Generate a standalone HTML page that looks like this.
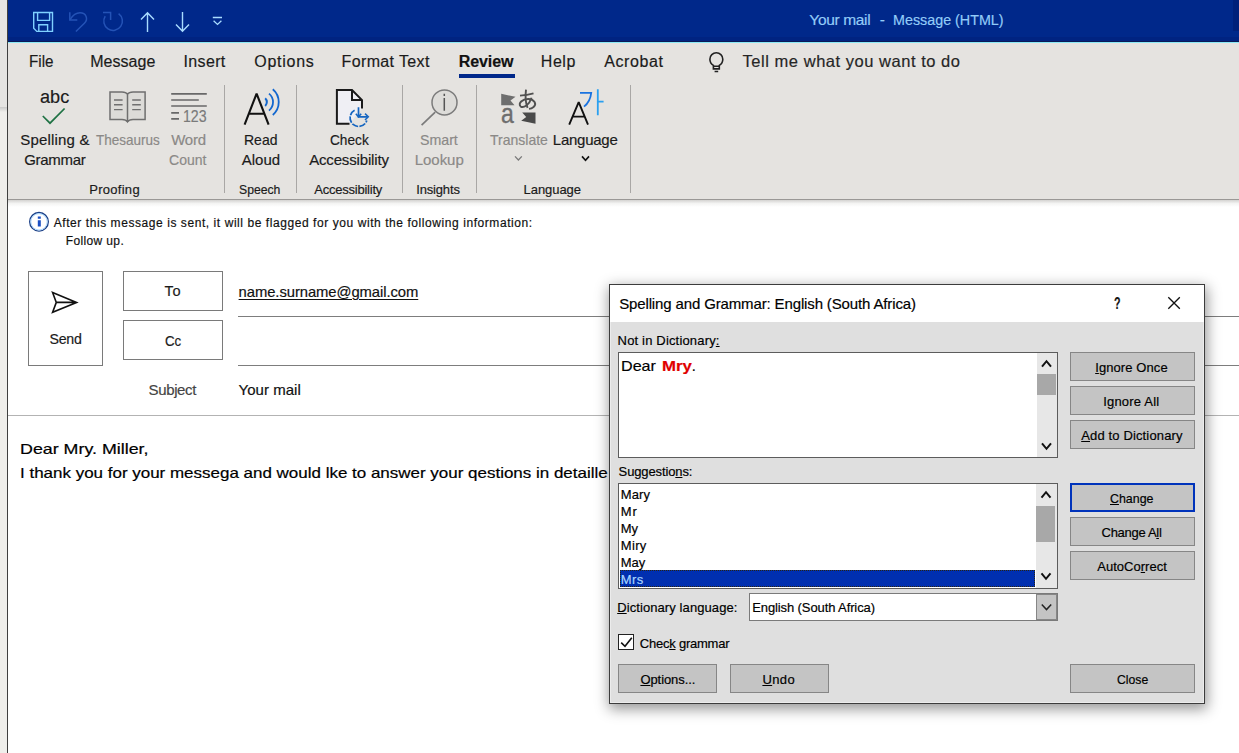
<!DOCTYPE html>
<html><head><meta charset="utf-8"><title>Your mail - Message (HTML)</title>
<style>
html,body{margin:0;padding:0;}
body{width:1239px;height:753px;overflow:hidden;background:#fff;font-family:"Liberation Sans",sans-serif;position:relative;}
.a{position:absolute;}
.t{position:absolute;white-space:pre;-webkit-text-stroke:0.18px currentColor;}
u{text-decoration:underline;text-underline-offset:1px;text-decoration-thickness:1px;}
svg{position:absolute;overflow:visible;}
.sep{position:absolute;top:85px;width:1px;height:108px;background:#a9a7a5;}
.hb{position:absolute;border:1px solid #7a7a7a;background:#fff;box-sizing:border-box;}
.btn{position:absolute;box-sizing:border-box;background:#c4c4c4;border:1px solid #868686;left:1070px;width:125px;height:29px;}
.box{position:absolute;box-sizing:border-box;background:#fff;border:1px solid #5c5c5c;}
.trk{position:absolute;background:#e7e7e7;}
.thm{position:absolute;background:#a8a8a8;}
</style></head>
<body>
<!-- left strip -->
<div class="a" style="left:0;top:0;width:7px;height:753px;background:#efeeeb;"></div>
<div class="a" style="left:0;top:0;width:7px;height:108px;background:#e5e4e2;"></div>
<div class="a" style="left:0;top:107px;width:7px;height:5px;background:linear-gradient(#c9c9c9,#efeeeb);"></div>
<div class="a" style="left:7px;top:0;width:1px;height:753px;background:#3f3f3f;"></div>
<!-- title bar -->
<div class="a" style="left:8px;top:0;width:1231px;height:41px;background:#00288a;"></div>
<div class="a" style="left:8px;top:37px;width:1231px;height:4px;background:#002381;"></div>
<div class="a" style="left:8px;top:41px;width:1231px;height:1px;background:#0a1a55;"></div>
<div class="a" style="left:8px;top:42px;width:1231px;height:1px;background:#8be9f7;"></div>
<div class="a" style="left:1233px;top:0;width:6px;height:31px;background:#00207a;"></div>
<!-- ribbon bg -->
<div class="a" style="left:8px;top:43px;width:1231px;height:156px;background:#e5e3e0;"></div>
<div class="a" style="left:8px;top:199px;width:1231px;height:1px;background:#9a9896;"></div>
<div class="a" style="left:8px;top:200px;width:1231px;height:7px;background:linear-gradient(#d4d3d1,#f4f4f3 50%,#fff);"></div>
<!-- review underline -->
<div class="a" style="left:459px;top:74px;width:56px;height:4px;background:#00288a;"></div>
<!-- separators -->
<div class="sep" style="left:224px"></div><div class="sep" style="left:296px"></div><div class="sep" style="left:402px"></div><div class="sep" style="left:476px"></div><div class="sep" style="left:630px"></div>
<!-- header -->
<div class="hb" style="left:28px;top:271px;width:75px;height:95px;"></div>
<div class="hb" style="left:123px;top:271px;width:100px;height:40px;"></div>
<div class="hb" style="left:123px;top:320px;width:100px;height:40px;"></div>
<div class="a" style="left:238px;top:316px;width:1001px;height:1px;background:#7d7d7d;"></div>
<div class="a" style="left:238px;top:365px;width:1001px;height:1px;background:#7d7d7d;"></div>
<div class="a" style="left:8px;top:415px;width:1231px;height:1px;background:#b3b3b3;"></div>
<svg width="1239" height="753" viewBox="0 0 1239 753" style="left:0;top:0" fill="none" stroke-linecap="butt">
<!-- QAT: save -->
<g stroke="#7fd0ff" stroke-width="1.4">
<path d="M33.7 12.5H52.5V31.4H36.8L33.7 28.3Z"/>
<path d="M37.6 12.5V20.4H49.6V12.5"/>
<path d="M38.8 31.4V24.8H47.6V31.4"/>
</g>
<!-- undo / redo (dim) -->
<g stroke="#2453b6" stroke-width="1.5">
<path d="M69.8 12.3V19.9H77.3"/>
<path d="M70 19.6C73 15 76.5 12.8 80 12.8C86.2 12.8 88.6 19.2 84.4 23.2L75.9 31.5"/>
<path d="M103 12.6H110.6V20"/>
<path d="M118.6 13.6A9.3 9.3 0 1 1 105.2 16.2"/>
</g>
<!-- up / down arrows -->
<g stroke="#a9dcff" stroke-width="1.4">
<path d="M147.5 32V12.8M141 19.6L147.5 12.8L154 19.6"/>
<path d="M182.5 12V31.2M176 24.4L182.5 31.2L189 24.4"/>
<path d="M212.8 17.5H222M213.6 20.7L217.5 24.4L221.4 20.7" stroke-width="1.3"/>
</g>
<!-- bulb -->
<g stroke="#222" stroke-width="1.6">
<path d="M713.4 68.9V65.4C711.2 64 709.9 61.8 709.9 59.2A6.45 6.45 0 0 1 722.8 59.2C722.8 61.8 721.5 64 719.3 65.4V68.9Z"/>
<path d="M713.4 66.3H719.3M714.6 71.5H718.2"/>
</g>
<!-- spelling check mark -->
<path d="M42.8 116L50 123.2L64.6 108.5" stroke="#1f7244" stroke-width="1.7"/>
<!-- thesaurus book -->
<g stroke="#6f6f6f" stroke-width="1.5">
<path d="M127.5 94.2C126.5 92.6 124.5 91.9 122 91.9H110V119.6H122C124.5 119.6 126.5 120.3 127.5 121.9C128.5 120.3 130.5 119.6 133 119.6H145.1V91.9H133C130.5 91.9 128.5 92.6 127.5 94.2Z" fill="#dcdbd8"/>
<path d="M127.5 94.2V121.9"/>
<path d="M114 100H122.6M114 104.8H122.6M114 109.6H122.6M132.2 100H140.8M132.2 104.8H140.8M132.2 109.6H140.8" stroke-width="1.4"/>
</g>
<!-- word count -->
<g stroke="#686868" stroke-width="1.7">
<path d="M171.2 93.8H206.8M171.2 100H198.8M171.2 106H206.8M171.2 112.8H179M171.2 118.8H179"/>
</g>
<!-- read aloud -->
<g stroke="#111" stroke-width="2.1" stroke-linejoin="bevel">
<path d="M244.6 124.6L256.6 93.6L268.6 124.6M249 113.8H264.3"/>
</g>
<g stroke="#1267cf" stroke-width="1.8">
<path d="M265.2 98.3A5.2 5.2 0 0 1 265.2 105.9" stroke-width="2"/>
<path d="M269 93.6A11 11 0 0 1 269 110.6"/>
<path d="M272.8 89.2A17 17 0 0 1 272.8 115"/>
</g>
<!-- check accessibility -->
<g stroke="#1a1a1a" stroke-width="2">
<path d="M349.5 123.8H336.9V90.1H352L362 100.1V108.5" fill="#efeff4"/>
<path d="M352 90.1V100.1H362"/>
</g>
<g stroke="#1565c0" stroke-width="1.7">
<path d="M354.6 110.3A8.6 8.6 0 1 0 366.8 120.6" stroke-dasharray="6.5 1.3"/>
<path d="M358.5 107.2V116.8H367.5"/>
<path d="M355.8 113.8L358.5 116.8L361.2 113.8M365 113.6L368.3 116.8L365 120" stroke-width="1.5"/>
</g>
<!-- smart lookup -->
<g stroke="#7b7b7b" stroke-width="1.5">
<circle cx="444.5" cy="102.4" r="12.5" fill="#dddcd9"/>
<path d="M435.2 112.2L421.6 125.2" stroke-width="1.7"/>
<path d="M444.3 98V110.8M444.3 93.8V96" stroke="#555" stroke-width="1.5"/>
</g>
<!-- translate -->
<path d="M501.2 93.8L515.5 96.8L510.5 100.5L514.5 105.2H501.2Z" fill="#6e6e6e"/>
<path d="M535.5 123.8L521.2 120.8L526.2 117.1L522.2 112.4H535.5Z" fill="#4a4a4a"/>
<g stroke="#505050" stroke-width="1.9">
<path d="M520 95.6Q527 95.2 533.5 93.4"/>
<path d="M526 89.6C525.2 96 525.6 103 527.6 107.8"/>
<path d="M531.6 97.8C529.5 104.5 523.5 108.6 520.6 106.4C517.6 103.4 522.5 98.8 528.5 99C534.5 99.4 537 104.2 533.6 107Q531.6 108.6 529 108.9"/>
</g>
<!-- language -->
<g stroke="#111" stroke-width="1.9" stroke-linejoin="bevel">
<path d="M569.2 124.6L578.7 102.2L588 124.6M572.6 116.6H585"/>
</g>
<path d="M580 92.8H591.2C590.6 98.5 588 103.4 584 106.6" stroke="#1a73e0" stroke-width="1.8"/>
<path d="M597.8 89.2V115.2M597.8 101.6H603.6" stroke="#2aa0f0" stroke-width="1.8"/>
<!-- chevrons -->
<path d="M515 156.4L518.4 160L521.8 156.4" stroke="#7a7a7a" stroke-width="1.3"/>
<path d="M582 156.4L585.5 160.3L589 156.4" stroke="#111" stroke-width="1.6"/>
<!-- info icon -->
<circle cx="39" cy="221.8" r="9.3" stroke="#1b3f86" stroke-width="1.4" fill="#fff"/>
<circle cx="39" cy="221.8" r="8.2" stroke="#a8d8ff" stroke-width="1"/>
<path d="M39.3 220.2V226.6M39.3 216.6V218.8" stroke="#1a4fc4" stroke-width="3"/>
<!-- send icon -->
<path d="M52.6 292.5L76.6 302.4L52.6 312.3L56.3 302.4ZM56.3 302.4H76" stroke="#111" stroke-width="1.6" stroke-linejoin="miter"/>
</svg>

<span class="t" style="left:809.30px;top:9.83px;font-size:15.5px;line-height:20px;color:#93ccf8;letter-spacing:-0.337px;">Your mail</span>
<span class="t" style="left:879.80px;top:9.83px;font-size:15.5px;line-height:20px;color:#93ccf8;letter-spacing:-1.000px;">-</span>
<span class="t" style="left:892.98px;top:9.83px;font-size:15.5px;line-height:20px;color:#93ccf8;transform:scaleX(0.9236);transform-origin:0 0;">Message (HTML)</span>
<span class="t" style="left:28.85px;top:50.56px;font-size:16px;line-height:21px;color:#1b1b1b;transform:scaleX(0.9484);transform-origin:0 0;">File</span>
<span class="t" style="left:90.20px;top:50.56px;font-size:16px;line-height:21px;color:#1b1b1b;letter-spacing:0.029px;">Message</span>
<span class="t" style="left:183.60px;top:50.56px;font-size:16px;line-height:21px;color:#1b1b1b;letter-spacing:0.326px;">Insert</span>
<span class="t" style="left:254.20px;top:50.56px;font-size:16px;line-height:21px;color:#1b1b1b;letter-spacing:0.743px;">Options</span>
<span class="t" style="left:341.60px;top:50.56px;font-size:16px;line-height:21px;color:#1b1b1b;letter-spacing:0.358px;">Format Text</span>
<span class="t" style="left:458.80px;top:50.56px;font-size:16px;line-height:21px;color:#111;font-weight:700;letter-spacing:-0.099px;">Review</span>
<span class="t" style="left:540.80px;top:50.56px;font-size:16px;line-height:21px;color:#1b1b1b;letter-spacing:0.531px;">Help</span>
<span class="t" style="left:604.20px;top:50.56px;font-size:16px;line-height:21px;color:#1b1b1b;letter-spacing:0.584px;">Acrobat</span>
<span class="t" style="left:742.60px;top:50.58px;font-size:16.5px;line-height:21px;color:#262626;letter-spacing:0.530px;">Tell me what you want to do</span>
<span class="t" style="left:20.20px;top:130.00px;font-size:15px;line-height:20px;color:#1b1b1b;letter-spacing:0.185px;">Spelling &amp;</span>
<span class="t" style="left:24.20px;top:150.00px;font-size:15px;line-height:20px;color:#1b1b1b;letter-spacing:-0.290px;">Grammar</span>
<span class="t" style="left:96.20px;top:130.68px;font-size:14.5px;line-height:19px;color:#8b8987;transform:scaleX(0.9318);transform-origin:0 0;">Thesaurus</span>
<span class="t" style="left:171.20px;top:130.00px;font-size:15px;line-height:20px;color:#8b8987;letter-spacing:-0.208px;">Word</span>
<span class="t" style="left:169.20px;top:150.00px;font-size:15px;line-height:20px;color:#8b8987;transform:scaleX(0.9349);transform-origin:0 0;">Count</span>
<span class="t" style="left:243.67px;top:130.00px;font-size:15px;line-height:20px;color:#1b1b1b;transform:scaleX(0.9329);transform-origin:0 0;">Read</span>
<span class="t" style="left:241.80px;top:150.00px;font-size:15px;line-height:20px;color:#1b1b1b;letter-spacing:-0.005px;">Aloud</span>
<span class="t" style="left:330.20px;top:130.00px;font-size:15px;line-height:20px;color:#1b1b1b;transform:scaleX(0.9113);transform-origin:0 0;">Check</span>
<span class="t" style="left:309.20px;top:150.00px;font-size:15px;line-height:20px;color:#1b1b1b;letter-spacing:-0.166px;">Accessibility</span>
<span class="t" style="left:420.20px;top:130.00px;font-size:15px;line-height:20px;color:#8b8987;transform:scaleX(0.9452);transform-origin:0 0;">Smart</span>
<span class="t" style="left:414.80px;top:150.00px;font-size:15px;line-height:20px;color:#8b8987;letter-spacing:-0.054px;">Lookup</span>
<span class="t" style="left:489.80px;top:130.00px;font-size:15px;line-height:20px;color:#8b8987;transform:scaleX(0.9346);transform-origin:0 0;">Translate</span>
<span class="t" style="left:552.80px;top:130.00px;font-size:15px;line-height:20px;color:#1b1b1b;letter-spacing:-0.257px;">Language</span>
<span class="t" style="left:89.20px;top:181.00px;font-size:13px;line-height:17px;color:#1b1b1b;letter-spacing:0.287px;">Proofing</span>
<span class="t" style="left:239.20px;top:181.00px;font-size:13px;line-height:17px;color:#1b1b1b;transform:scaleX(0.9393);transform-origin:0 0;">Speech</span>
<span class="t" style="left:314.20px;top:181.00px;font-size:13px;line-height:17px;color:#1b1b1b;letter-spacing:-0.225px;">Accessibility</span>
<span class="t" style="left:416.20px;top:181.00px;font-size:13px;line-height:17px;color:#1b1b1b;letter-spacing:-0.157px;">Insights</span>
<span class="t" style="left:523.60px;top:181.00px;font-size:13px;line-height:17px;color:#1b1b1b;letter-spacing:-0.059px;">Language</span>
<span class="t" style="left:53.70px;top:214.84px;font-size:12px;line-height:16px;color:#111;letter-spacing:0.567px;">After this message is sent, it will be flagged for you with the following information:</span>
<span class="t" style="left:65.70px;top:232.84px;font-size:12px;line-height:16px;color:#111;letter-spacing:0.371px;">Follow up.</span>
<span class="t" style="left:164.40px;top:281.84px;font-size:14.6px;line-height:19px;color:#1b1b1b;letter-spacing:0.904px;">To</span>
<span class="t" style="left:165.00px;top:331.94px;font-size:14.6px;line-height:19px;color:#1b1b1b;transform:scaleX(0.9122);transform-origin:0 0;">Cc</span>
<span class="t" style="left:49.40px;top:330.08px;font-size:14.2px;line-height:18px;color:#1b1b1b;letter-spacing:-0.215px;">Send</span>
<span class="t" style="left:238.60px;top:282.77px;font-size:14.8px;line-height:19px;color:#111;letter-spacing:-0.067px;text-decoration:underline;text-underline-offset:1.5px;">name.surname@gmail.com</span>
<span class="t" style="left:148.60px;top:380.30px;font-size:15px;line-height:20px;color:#444;letter-spacing:-0.377px;">Subject</span>
<span class="t" style="left:238.60px;top:380.30px;font-size:15px;line-height:20px;color:#111;letter-spacing:0.019px;">Your mail</span>
<span class="t" style="left:20.21px;top:438.55px;font-size:15px;line-height:20px;color:#000;transform:scaleX(1.1889);transform-origin:0 0;-webkit-text-stroke:0.2px #000;">Dear Mry. Miller,</span>
<span class="t" style="left:20.27px;top:462.80px;font-size:15px;line-height:20px;color:#000;transform:scaleX(1.1314);transform-origin:0 0;-webkit-text-stroke:0.2px #000;">I thank you for your messega and would lke to answer your qestions in detaille</span>
<span class="t" style="left:39.90px;top:85.49px;font-size:18.8px;line-height:24px;color:#1b1b1b;transform:scaleX(0.9635);transform-origin:0 0;">abc</span>
<span class="t" style="left:183.02px;top:105.56px;font-size:16px;line-height:21px;color:#7a7a7a;transform:scaleX(0.8838);transform-origin:0 0;">123</span>
<span class="t" style="left:500.89px;top:95.22px;font-size:28.5px;line-height:37px;color:#6e6e6e;transform:scaleX(0.8067);transform-origin:0 0;-webkit-text-stroke:0.4px #6e6e6e;">a</span>
<!-- dialog -->
<div class="a" style="left:609px;top:284px;width:596px;height:420px;box-sizing:border-box;border:1px solid #3c3c3c;background:#dfdfdf;box-shadow:inset 0 0 0 1px #ececec,1px 4px 13px 1px rgba(0,0,0,.42);"></div>
<div class="a" style="left:610px;top:285px;width:594px;height:37px;background:#fff;"></div>
<div class="box" style="left:618px;top:352px;width:440px;height:106px;"></div>
<div class="trk" style="left:1037px;top:353px;width:20px;height:104px;"></div>
<div class="thm" style="left:1037px;top:374px;width:19px;height:21px;"></div>
<div class="box" style="left:618px;top:483px;width:440px;height:106px;"></div>
<div class="trk" style="left:1036px;top:484px;width:21px;height:104px;"></div>
<div class="thm" style="left:1036px;top:506px;width:19px;height:36px;"></div>
<div class="a" style="left:620px;top:570px;width:415px;height:17px;background:#002fb0;outline:1px dotted #2a2410;outline-offset:-1px;"></div>
<div class="box" style="left:749px;top:593px;width:309px;height:28px;border-color:#7a7a7a;"></div>
<div class="a" style="left:1036px;top:594px;width:21px;height:26px;box-sizing:border-box;background:#c4c4c4;border:1px solid #868686;"></div>
<div class="a" style="left:618px;top:634px;width:16px;height:16px;box-sizing:border-box;background:#fff;border:1px solid #222;"></div>
<div class="btn" style="top:352px"></div><div class="btn" style="top:386px"></div><div class="btn" style="top:420px"></div>
<div class="btn" style="top:483px;border:2px solid #0033bb;"></div><div class="btn" style="top:517px"></div><div class="btn" style="top:551px"></div>
<div class="btn" style="top:664px"></div>
<div class="btn" style="left:618px;width:99px;top:664px"></div><div class="btn" style="left:730px;width:99px;top:664px"></div>
<svg width="1239" height="753" viewBox="0 0 1239 753" style="left:0;top:0" fill="none">
<path d="M1168.3 297.2L1179.8 308.7M1179.8 297.2L1168.3 308.7" stroke="#111" stroke-width="1.3"/>
<g stroke="#111" stroke-width="2">
<path d="M1042 366.6L1046.5 361.2L1051 366.6"/>
<path d="M1042 443.4L1046.5 448.8L1051 443.4"/>
<path d="M1041.5 497.6L1046 492.2L1050.5 497.6"/>
<path d="M1041.5 573.4L1046 578.8L1050.5 573.4"/>
</g>
<path d="M1041.8 604.6L1046.5 609.6L1051.2 604.6" stroke="#222" stroke-width="1.5"/>
<path d="M621.2 642.6L625 646.3L631.8 637.8" stroke="#111" stroke-width="1.6"/>
</svg>

<span class="t" style="left:619.20px;top:293.80px;font-size:15px;line-height:20px;color:#000;letter-spacing:-0.136px;">Spelling and Grammar: English (South Africa)</span>
<span class="t" style="left:617.60px;top:332.00px;font-size:13px;line-height:17px;color:#000;letter-spacing:0.167px;">Not in Dictionary<u>:</u></span>
<span class="t" style="left:620.69px;top:356.68px;font-size:14.5px;line-height:19px;color:#000;transform:scaleX(1.1111);transform-origin:0 0;-webkit-text-stroke:0.15px #000;">Dear</span>
<span class="t" style="left:661.60px;top:356.68px;font-size:14.5px;line-height:19px;color:#e00000;font-weight:700;transform:scaleX(1.1586);transform-origin:0 0;">Mry</span>
<span class="t" style="left:691.80px;top:356.68px;font-size:14.5px;line-height:19px;color:#000;letter-spacing:0.200px;-webkit-text-stroke:0.2px #000;">.</span>
<span class="t" style="left:618.60px;top:463.40px;font-size:13px;line-height:17px;color:#000;letter-spacing:-0.123px;">Suggestio<u>n</u>s:</span>
<span class="t" style="left:620.80px;top:486.00px;font-size:13px;line-height:17px;color:#000;letter-spacing:0.071px;">Mary</span>
<span class="t" style="left:620.80px;top:503.00px;font-size:13px;line-height:17px;color:#000;letter-spacing:0.771px;">Mr</span>
<span class="t" style="left:620.80px;top:520.00px;font-size:13px;line-height:17px;color:#000;letter-spacing:-0.229px;">My</span>
<span class="t" style="left:620.80px;top:537.00px;font-size:13px;line-height:17px;color:#000;letter-spacing:0.318px;">Miry</span>
<span class="t" style="left:620.80px;top:554.00px;font-size:13px;line-height:17px;color:#000;letter-spacing:-0.030px;">May</span>
<span class="t" style="left:620.80px;top:571.00px;font-size:13px;line-height:17px;color:#a9d6ff;letter-spacing:0.421px;">Mrs</span>
<span class="t" style="left:617.20px;top:599.40px;font-size:13px;line-height:17px;color:#000;letter-spacing:0.089px;"><u>D</u>ictionary language:</span>
<span class="t" style="left:752.20px;top:599.20px;font-size:13px;line-height:17px;color:#000;letter-spacing:-0.104px;">English (South Africa)</span>
<span class="t" style="left:639.80px;top:635.00px;font-size:13px;line-height:17px;color:#000;letter-spacing:-0.228px;">Chec<u>k</u> grammar</span>
<span class="t" style="left:1095.20px;top:359.00px;font-size:13px;line-height:17px;color:#000;letter-spacing:0.089px;"><u>I</u>gnore Once</span>
<span class="t" style="left:1103.20px;top:393.00px;font-size:13px;line-height:17px;color:#000;letter-spacing:0.196px;">I<u>g</u>nore All</span>
<span class="t" style="left:1081.20px;top:427.00px;font-size:13px;line-height:17px;color:#000;letter-spacing:0.144px;"><u>A</u>dd to Dictionary</span>
<span class="t" style="left:1110.20px;top:490.00px;font-size:13px;line-height:17px;color:#000;transform:scaleX(0.9535);transform-origin:0 0;"><u>C</u>hange</span>
<span class="t" style="left:1101.60px;top:524.00px;font-size:13px;line-height:17px;color:#000;letter-spacing:-0.301px;">Change A<u>l</u>l</span>
<span class="t" style="left:1097.20px;top:558.00px;font-size:13px;line-height:17px;color:#000;letter-spacing:0.025px;">AutoCo<u>r</u>rect</span>
<span class="t" style="left:1116.60px;top:671.00px;font-size:13px;line-height:17px;color:#000;transform:scaleX(0.9392);transform-origin:0 0;">Close</span>
<span class="t" style="left:640.40px;top:671.00px;font-size:13px;line-height:17px;color:#000;letter-spacing:-0.069px;"><u>O</u>ptions...</span>
<span class="t" style="left:762.40px;top:671.00px;font-size:13px;line-height:17px;color:#000;letter-spacing:0.384px;"><u>U</u>ndo</span>
<span class="t" style="left:1113.90px;top:292.76px;font-size:16px;line-height:21px;color:#111;font-weight:700;transform:scaleX(0.6667);transform-origin:0 0;">?</span>
</body></html>
